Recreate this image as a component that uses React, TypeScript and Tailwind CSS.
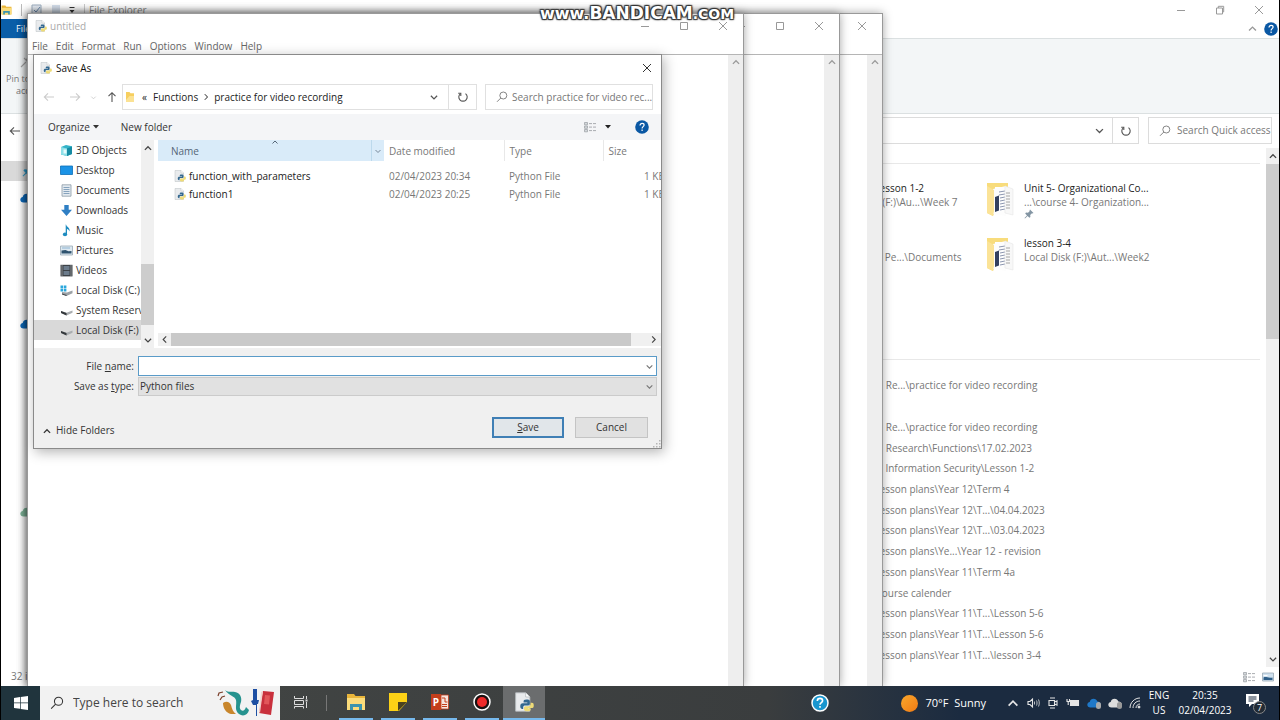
import React from "react";
import type { ReactNode } from "react";

type IconProps = { className?: string };

const line = { fill: "none", stroke: "currentColor", strokeWidth: 1.1 } as const;

function Chevron({ dir, className = "size-2" }: { dir: "up" | "down" | "left" | "right"; className?: string }) {
  const d = {
    up: "M1.5 5.5 4 3l2.5 2.5",
    down: "M1.5 3 4 5.5 6.5 3",
    left: "M5.5 1.2 2.8 4l2.7 2.8",
    right: "M2.8 1.2 5.5 4 2.8 6.8",
  }[dir];
  return (
    <svg viewBox="0 0 8 8" className={className} {...line} strokeWidth={1} aria-hidden="true">
      <path d={d} />
    </svg>
  );
}

function CloseIcon({ className = "size-[10px]" }: IconProps) {
  return (
    <svg viewBox="0 0 10 10" className={className} {...line} strokeWidth={1} aria-hidden="true">
      <path d="M1 1l8 8M9 1L1 9" />
    </svg>
  );
}

function MaxIcon() {
  return (
    <svg viewBox="0 0 10 10" className="size-[10px]" {...line} strokeWidth={1} aria-hidden="true">
      <path d="M1.5 1.5h7v7h-7z" />
    </svg>
  );
}

function RestoreIcon() {
  return (
    <svg viewBox="0 0 10 10" className="size-[10px]" {...line} strokeWidth={1} aria-hidden="true">
      <path d="M1.5 3h6v6h-6zM3.3 3V1.3h5.4v5.6H7.5" />
    </svg>
  );
}

function MinIcon() {
  return (
    <svg viewBox="0 0 10 10" className="size-[10px]" {...line} strokeWidth={1} aria-hidden="true">
      <path d="M1 5.5h8" />
    </svg>
  );
}

function Arrow({ dir, className = "" }: { dir: "left" | "right" | "up"; className?: string }) {
  const d = {
    left: "M11 6H1.5M5 2.3 1.3 6 5 9.7",
    right: "M1 6h9.5M7 2.3 10.7 6 7 9.7",
    up: "M6 11V1.8M2.5 5.2 6 1.7l3.500 3.5",
  }[dir];
  return (
    <svg viewBox="0 0 12 12" className={"size-3 " + className} {...line} aria-hidden="true">
      <path d={d} />
    </svg>
  );
}

function RefreshIcon() {
  return (
    <svg viewBox="0 0 12 12" className="size-3" {...line} aria-hidden="true">
      <path d="M3.500 2.600A4.200 4.200 0 1 0 8.500 2.600" />
      <path d="M3.800 5V2.200H1.200" />
    </svg>
  );
}

function SearchIcon({ className = "size-3" }: IconProps) {
  return (
    <svg viewBox="0 0 12 12" className={className} {...line} strokeWidth={0.9} aria-hidden="true">
      <circle cx="7.300" cy="4.500" r="3.500" />
      <path d="M4.800 7 1 10.800" />
    </svg>
  );
}

function HelpIcon({ className = "size-[14px]" }: IconProps) {
  return (
    <svg viewBox="0 0 14 14" className={className} aria-hidden="true">
      <circle cx="7" cy="7" r="6.800" fill="#0a58a4" />
      <path d="M5 5.400c0-1.400 1-2.100 2.100-2.100 1.200 0 2 .8 2 1.800 0 1.500-2 1.600-2 3.300M7.100 9.600v1.300" fill="none" stroke="#fff" strokeWidth="1.200" />
    </svg>
  );
}

function ViewsIcon() {
  return (
    <svg viewBox="0 0 12 12" className="size-3" aria-hidden="true">
      <path d="M.5 1.500h3v2.300h-3zM.5 5h3v2.300h-3zM.5 8.500h3v2.300h-3z" fill="#d4d8dc" stroke="#a0a4a8" strokeWidth=".8" />
      <path d="M5 2.600h3M9 2.600h3M5 6.100h3M9 6.100h3M5 9.600h3M9 9.600h3" stroke="#a0a4a8" strokeWidth=".9" />
    </svg>
  );
}

function PictureIcon({ className = "size-3" }: IconProps) {
  return (
    <svg viewBox="0 0 12 12" className={className} aria-hidden="true">
      <path d="M.5 2h11v8H.5z" fill="#cfe0ee" stroke="#9aa9b5" strokeWidth=".8" />
      <path d="M1.500 9V6.500C4 5 6 7.500 10.500 6.500V9z" fill="#2f5f88" />
      <path d="M1.500 4.500h4" stroke="#fff" />
    </svg>
  );
}

function PythonFile({ className = "size-3" }: IconProps) {
  return (
    <svg viewBox="0 0 24 24" className={className} aria-hidden="true">
      <path d="M2 1h12l5 5v17H2z" fill="#e9ebed" stroke="#b9bec2" />
      <path d="M14 1v5h5" fill="#fff" stroke="#b9bec2" />
      <path d="M15 9c-3 0-3.500 1-3.500 2.300V12.500H16v1h-5.500c-2 0-3 1.300-3 3.500s1 3.300 2.500 3.300H11V18.500c0-1.500 1-2.300 2.500-2.300H17c1.300 0 2-1 2-2v-3C19 9.800 18 9 15 9z" fill="#33688f" />
      <path d="M20 13v1.500c0 1.500-1 2.500-2.500 2.500H14c-1.300 0-2 1-2 2v2c0 1.300 1.500 2.200 4.200 2.200s3.800-.9 3.800-2.200v-1.200h-3v-.5h5c1.300 0 1.700-1.300 1.700-3.300s-.7-3-2.200-3z" fill="#eedb77" />
    </svg>
  );
}

function FolderSmall({ className = "size-3" }: IconProps) {
  return (
    <svg viewBox="0 0 12 12" className={className} aria-hidden="true">
      <path d="M2 1h3.500l1 1.200H10V11H2z" fill="#f7cf5f" />
      <path d="M5.500 5H10v6H2V9z" fill="#fbe294" />
    </svg>
  );
}

function ExplorerIcon({ className = "h-[18px] w-5" }: IconProps) {
  return (
    <svg viewBox="0 0 20 18" className={className} aria-hidden="true">
      <path d="M1 1h7l1.500 2H19v14H1z" fill="#e9b53a" />
      <path d="M1 5h18v12H1z" fill="#fbdc7b" />
      <path d="M4 17v-6h12v6h-3v-3H7v3z" fill="#3b94ae" />
    </svg>
  );
}

function BigFolder() {
  return (
    <svg viewBox="0 0 28 38" className="h-[38px] w-7 shrink-0" aria-hidden="true">
      <path d="M0 2h21v4H8v24l-2 5-6-3z" fill="#f8dc7c" />
      <path d="M6 8l13-3v30L6 33z" fill="#fdfdfd" />
      <path d="M8 16l4-1.500v15L8 31z" fill="#33405f" />
      <path d="M12 11l6-1M12 14l6-1M13 17l5-1M13 20l5-1M13 23l5-1M13 26l5-1M13 29l5-1" stroke="#8d97b0" />
      <path d="M18 5l8 3v26l-8-2z" fill="#f8f8f8" stroke="#e6e6e6" strokeWidth=".6" />
      <path d="M19 12h4M19 15h4M19 18h4M19 21h4M19 24h4M19 27h4" stroke="#9a9a9a" strokeWidth=".9" />
      <path d="M0 5l7 4v21l-1 5-6-3z" fill="#fbe397" />
    </svg>
  );
}

function Cloud({ className = "" }: IconProps) {
  return (
    <svg viewBox="0 0 14 10" className={"h-[10px] w-[14px] shrink-0 " + className} fill="currentColor" aria-hidden="true">
      <path d="M3.500 9.500C1.500 9.500.3 8.300.3 6.700c0-1.500 1-2.500 2.400-2.800C3.200 2 4.700.8 6.500.8c1.900 0 3.400 1.200 3.900 2.800 2 .1 3.300 1.300 3.300 3 0 1.700-1.200 2.900-3 2.900z" />
    </svg>
  );
}

function PlaceIcon({ kind }: { kind: string }) {
  const art: Record<string, ReactNode> = {
    cube: (
      <>
        <path d="M1 3l5-2 6 1.200V10l-5 2-6-1.500z" fill="#33b3c8" />
        <path d="M1 3l6 1.500V12l-6-1.500z" fill="#8fe0e8" />
        <path d="M7 4.500l5-2V10l-5 2z" fill="#168ba3" />
        <path d="M3.500 5.500h3v4h-3z" fill="#e5fafc" />
      </>
    ),
    desktop: <path d="M.5 2h12v8.500H.5z" fill="#1b93e6" stroke="#0b6fb8" strokeWidth=".8" />,
    document: (
      <>
        <path d="M2 .8h9v11.400H2z" fill="#e3eaf0" stroke="#8c9aa6" strokeWidth=".8" />
        <path d="M3.500 3.500h6M3.500 5.500h6M3.500 7.500h6M3.500 9.500h6" stroke="#86a3bd" />
      </>
    ),
    download: <path d="M4.300 1h4.400v4.800H12L6.500 12 1 5.800h3.300z" fill="#2f7fc4" />,
    music: (
      <>
        <path d="M6 .5c.5 2.500 4.500 3.300 3.500 7-.5-1.500-1.500-2.300-2.500-2.500V10.500H5.700V.5z" fill="#1e8cc0" />
        <ellipse cx="5" cy="10.400" rx="2.200" ry="1.800" fill="#1e8cc0" />
      </>
    ),
    picture: (
      <>
        <path d="M.5 2h12v9H.5z" fill="#dde8f0" stroke="#9aa9b5" strokeWidth=".8" />
        <path d="M1.500 9.500v-3l4-.5 3 1.200 3-.2v2.500z" fill="#2f536f" />
        <path d="M2 4h8" stroke="#8fb5d3" />
      </>
    ),
    video: (
      <>
        <path d="M.5.8h12v11.600H.5z" fill="#3d4247" />
        <path d="M3.500 2h6v4h-6zM3.500 7h6v4h-6z" fill="#6c7c8c" />
        <path d="M2 1.500v10.500M11 1.500v10.500" stroke="#d5d5d5" strokeDasharray="1 1" />
      </>
    ),
    windisk: (
      <>
        <path d="M.5 1.500h2.600v2.700H.5zM3.800 1.500h2.600v2.700H3.800zM.5 4.800h2.600v2.700H.5zM3.800 4.800h2.600v2.700H3.800z" fill="#2aa7dc" />
        <path d="M2 8l5 .5 5.500-2v2.700L6.500 12 2 10z" fill="#9ba1a6" />
        <path d="M2 9.500 6.500 11v1L2 10.500z" fill="#3c4044" />
      </>
    ),
    disk: (
      <>
        <path d="M1 7l5.500 1.700L12.500 6.500v2.200L6.500 11.500 1 9z" fill="#a9adb0" />
        <path d="M1 7l5.500 2v2.500L1 9z" fill="#34383b" />
      </>
    ),
  };
  return (
    <svg viewBox="0 0 13 13" className="size-[13px] shrink-0" aria-hidden="true">
      {art[kind]}
    </svg>
  );
}

/* ---------- File Explorer ---------- */

const recentPaths = [
  "d Re...\\practice for video recording",
  "",
  "d Re...\\practice for video recording",
  "d Research\\Functions\\17.02.2023",
  " - Information Security\\Lesson 1-2",
  "lesson plans\\Year 12\\Term 4",
  "lesson plans\\Year 12\\T...\\04.04.2023",
  "lesson plans\\Year 12\\T...\\03.04.2023",
  "lesson plans\\Ye...\\Year 12 - revision",
  "lesson plans\\Year 11\\Term 4a",
  "course calender",
  "lesson plans\\Year 11\\T...\\Lesson 5-6",
  "lesson plans\\Year 11\\T...\\Lesson 5-6",
  "lesson plans\\Year 11\\T...\\lesson 3-4",
];

function Explorer() {
  return (
    <section className="flex h-full flex-col bg-white text-[#777]">
      <header className="flex h-[19px] items-center justify-between">
        <div className="flex items-center gap-[9px]">
          <ExplorerIcon className="h-3 w-[11px]" />
          <span className="h-3 w-px bg-[#bbb]" />
          <svg viewBox="0 0 12 12" className="size-3" aria-hidden="true">
            <path d="M1 1h9v10H1z" fill="#e6edf5" stroke="#9fb0c2" />
            <path d="M3 6l2 2 4-5" fill="none" stroke="#6c8bb0" />
          </svg>
          <span className="h-[10px] w-2 bg-[#d5dfec]" />
          <svg viewBox="0 0 6 8" className="h-2 w-[6px]" aria-hidden="true">
            <path d="M.5 1h5v1h-5zM.5 4h5L3 7z" fill="#333" />
          </svg>
          <span className="border-l border-[#ccc] pl-1 text-[10px] leading-3 text-[#888]">File Explorer</span>
        </div>
        <div className="flex items-center gap-[29px] pr-[15px] text-[#999]">
          <button aria-label="Minimize"><MinIcon /></button>
          <button aria-label="Restore"><RestoreIcon /></button>
          <button aria-label="Close"><CloseIcon /></button>
        </div>
      </header>
      <div className="flex h-[19px] items-center justify-between">
        <button className="h-full w-[40px] bg-[#0a5ea8] pl-[15px] text-left text-[9px] text-white">File</button>
        <div className="flex items-center gap-[6px] pr-px text-[#999]">
          <button aria-label="Collapse ribbon"><Chevron dir="up" className="size-[11px]" /></button>
          <button aria-label="Help"><HelpIcon /></button>
        </div>
      </div>
      <div className="flex h-[76px] flex-col border-y border-[#dbe0e1] bg-[#f3f6f7] pl-[5px] pt-[14px] text-[9px] leading-3">
        <svg viewBox="0 0 16 16" className="ml-[14px] size-4" {...line} stroke="#aaa" aria-hidden="true">
          <path d="M1 14l5-5M4 5l7 7M6 7l5-5 3 3-5 5" />
        </svg>
        <span className="pt-1">Pin to Quick</span>
        <span className="pl-[10px]">access</span>
      </div>
      <div className="flex items-center gap-[9px] py-[3px] pl-2 pr-[7px]">
        <Arrow dir="left" className="text-[#555]" />
        <div className="flex h-[27px] flex-1 items-center justify-end border border-[#dcdcdc]">
          <button aria-label="Previous locations" className="px-[7px] text-[#555]"><Chevron dir="down" className="size-[11px]" /></button>
          <button aria-label="Refresh" className="flex h-full w-[26px] items-center justify-center border-l border-[#dcdcdc] text-[#555]"><RefreshIcon /></button>
        </div>
        <label className="flex h-[27px] w-[124px] items-center gap-[6px] overflow-hidden border border-[#dcdcdc] pl-[10px]">
          <SearchIcon className="size-3 shrink-0" />
          <input aria-label="Search Quick access" placeholder="Search Quick access" className="w-24 bg-transparent text-[10px] outline-none placeholder:text-[#777]" />
        </label>
      </div>
      <div className="flex min-h-0 flex-1">
        <nav className="flex w-[40px] flex-col pt-[14px]">
          <div className="flex h-5 items-center justify-end bg-[#d9d9d9] pr-[7px]">
            <svg viewBox="0 0 10 10" className="size-3" fill="#2f9fd0" aria-hidden="true">
              <path d="M6 .5l3.500 3.500-1 .5-.5-.3L6.200 6l.2 2-1 .8L3.600 7 1 9.500.5 9 3 6.400 1.200 4.600l.8-1 2 .2L5.800 2l-.3-.5z" />
            </svg>
          </div>
          <div className="flex flex-col items-start pl-[19px] pt-3 text-[#0f6cbd]">
            <Cloud />
            <Cloud className="mt-[116px]" />
            <Cloud className="mt-[178px] text-[#7fb59a]" />
          </div>
        </nav>
        <main className="flex min-w-0 flex-1 flex-col pl-[836px] pr-[6px] pt-4 text-[10px] leading-[14px]">
          <div className="border-t border-[#e8e8e8]" />
          <div className="flex h-[195px] pt-[17px]">
            <div className="flex w-[110px] flex-col gap-[27px] whitespace-pre">
              <p className="h-7"><span className="text-[#222]">lesson 1-2</span><br />{"  (F:)\\Au...\\Week 7"}</p>
              <p className="h-7"><br />{"   Pe...\\Documents"}</p>
            </div>
            <div className="flex flex-col gap-[17px]">
              <div className="flex gap-[9px]">
                <BigFolder />
                <p className="whitespace-nowrap">
                  <span className="text-[#222]">Unit 5- Organizational Co...</span><br />
                  ...\course 4- Organization...
                  <svg viewBox="0 0 10 10" className="size-[10px]" fill="#8395a3" aria-hidden="true">
                    <path d="M6 .5l3.500 3.500-1 .5-.5-.3L6.200 6l.2 2-1 .8L3.600 7 1 9.500.5 9 3 6.400 1.200 4.600l.8-1 2 .2L5.800 2l-.3-.5z" />
                  </svg>
                </p>
              </div>
              <div className="flex gap-[9px]">
                <BigFolder />
                <p className="whitespace-nowrap">
                  <span className="text-[#222]">lesson 3-4</span><br />
                  Local Disk (F:)\Aut...\Week2
                </p>
              </div>
            </div>
          </div>
          <div className="border-t border-[#e8e8e8]" />
          <ul className="mt-[15px] flex h-[290px] flex-col whitespace-pre">
            {recentPaths.map((p, i) => (
              <li key={i} className="flex flex-1 items-center">{p}</li>
            ))}
          </ul>
        </main>
        <div className="mt-px flex w-[13px] flex-col items-center bg-[#f0f0f0] text-[#444]">
          <Chevron dir="up" className="my-[3px] size-[10px]" />
          <div className="h-[175px] w-full bg-[#cdcdcd]" />
          <Chevron dir="down" className="mb-[3px] mt-auto size-[10px]" />
        </div>
      </div>
      <footer className="flex h-[19px] items-center justify-between pl-[10px] pr-[5px] text-[10px]">
        <span>32 items</span>
        <div className="flex gap-[7px]"><ViewsIcon /><PictureIcon /></div>
      </footer>
    </section>
  );
}

/* ---------- Editor windows ---------- */

function EditorWindow({ className, children }: { className: string; children?: ReactNode }) {
  return (
    <section className={"absolute bottom-0 left-[26px] top-[13px] flex flex-col border border-b-0 border-[#999] bg-white shadow-[0_0_9px_rgba(0,0,0,0.35)] " + className}>
      <header className="flex h-[41px] justify-between border-b border-[#b5b5b5]">
        <div>{children}</div>
        <div className="flex h-6 items-center gap-[29px] pr-[15px] text-[#999]">
          <button aria-label="Minimize"><MinIcon /></button>
          <button aria-label="Maximize"><MaxIcon /></button>
          <button aria-label="Close"><CloseIcon /></button>
        </div>
      </header>
      <div className="flex w-[15px] flex-1 justify-center self-end bg-[#eee] pt-[2px] text-[#999]">
        <Chevron dir="up" className="size-[10px]" />
      </div>
    </section>
  );
}

/* ---------- Save dialog ---------- */

const places = [
  ["cube", "3D Objects"],
  ["desktop", "Desktop"],
  ["document", "Documents"],
  ["download", "Downloads"],
  ["music", "Music"],
  ["picture", "Pictures"],
  ["video", "Videos"],
  ["windisk", "Local Disk (C:)"],
  ["disk", "System Reserv"],
  ["disk", "Local Disk (F:)"],
];

const files = [
  ["function_with_parameters", "02/04/2023 20:34"],
  ["function1", "02/04/2023 20:25"],
];

function SaveDialog() {
  return (
    <section className="absolute left-[32px] top-[54px] flex w-[629px] flex-col border border-[#8a8a8a] bg-white text-[10px] text-[#333] shadow-[2px_3px_12px_rgba(0,0,0,0.3)]">
      <header className="flex h-[26px] items-center justify-between pl-[6px] pr-[9px]">
        <div className="flex items-center gap-1 text-[#111]"><PythonFile /> Save As</div>
        <button aria-label="Close"><CloseIcon /></button>
      </header>

      <div className="flex h-8 items-center gap-2 pl-[9px] pr-2">
        <div className="flex items-center text-[#ccc]">
          <Arrow dir="left" />
          <Arrow dir="right" className="ml-[14px]" />
          <Chevron dir="down" className="ml-[9px] size-[7px]" />
          <Arrow dir="up" className="ml-[9px] text-[#555]" />
        </div>
        <div className="-ml-1 flex h-[26px] flex-1 items-center border border-[#e0e0e0] pl-px text-[#222]">
          <FolderSmall />
          <span className="px-[6px]">«</span>
          <span>Functions</span>
          <Chevron dir="right" className="mx-1 size-2" />
          <span>practice for video recording</span>
          <button aria-label="Previous locations" className="ml-auto px-[9px] text-[#555]"><Chevron dir="down" className="size-[10px]" /></button>
          <button aria-label="Refresh" className="flex h-full w-7 items-center justify-center border-l border-[#e0e0e0] text-[#555]"><RefreshIcon /></button>
        </div>
        <label className="flex h-[26px] w-[168px] items-center gap-1 overflow-hidden border border-[#e0e0e0] pl-[10px] text-[#777]">
          <SearchIcon className="size-3 shrink-0" />
          <input aria-label="Search" placeholder="Search practice for video rec..." className="min-w-0 flex-1 bg-transparent outline-none placeholder:text-[#777]" />
        </label>
      </div>

      <div className="mt-px flex h-[26px] items-center bg-[#f4f5f7] pl-[14px] pr-3">
        <button className="flex items-center gap-[3px]">
          Organize
          <svg viewBox="0 0 6 4" className="h-1 w-[6px]" aria-hidden="true"><path d="M0 0h6L3 3.500z" fill="#333" /></svg>
        </button>
        <button className="ml-[22px]">New folder</button>
        <button aria-label="Change your view" className="ml-auto flex items-center gap-[9px]">
          <ViewsIcon />
          <svg viewBox="0 0 6 4" className="h-1 w-[6px]" aria-hidden="true"><path d="M0 0h6L3 3.500z" fill="#222" /></svg>
        </button>
        <button aria-label="Help" className="ml-6"><HelpIcon /></button>
      </div>

      <div className="flex h-[208px]">
        <ul className="w-[107px] overflow-hidden">
          {places.map(([kind, name], i) => (
            <li key={name} className={"flex h-5 items-center gap-[3px] whitespace-nowrap pl-[26px] " + (i === 9 ? "bg-[#d9d9d9]" : "")}>
              <PlaceIcon kind={kind} />
              {name}
            </li>
          ))}
        </ul>
        <div className="flex w-[13px] flex-col items-center bg-[#f0f0f0] text-[#444]">
          <Chevron dir="up" className="mt-[3px] size-[10px]" />
          <div className="mt-[111px] h-[61px] w-full bg-[#cdcdcd]" />
          <Chevron dir="down" className="mb-[3px] mt-auto size-[10px]" />
        </div>
        <div className="ml-1 flex min-w-0 flex-1 flex-col overflow-hidden">
          <table className="w-full table-fixed border-collapse text-left text-[#777]">
            <colgroup>
              <col className="w-[226px]" />
              <col className="w-[120px]" />
              <col className="w-[99px]" />
              <col />
            </colgroup>
            <thead>
              <tr className="h-[21px]">
                <th className="relative bg-[#d9ebf9] p-0 pl-[13px] pt-px font-normal text-[#567]">
                  Name
                  <Chevron dir="up" className="absolute left-[113px] top-[-2px] size-2" />
                  <span className="absolute inset-y-0 right-0 flex w-[13px] items-center justify-center border-l border-[#bcd9ec] text-[#789]">
                    <Chevron dir="down" className="size-2" />
                  </span>
                </th>
                <th className="border-r border-[#e8e8e8] p-0 pl-[5px] pt-px font-normal">Date modified</th>
                <th className="border-r border-[#e8e8e8] p-0 pl-[5px] pt-px font-normal">Type</th>
                <th className="p-0 pl-[5px] pt-px font-normal">Size</th>
              </tr>
            </thead>
            <tbody>
              <tr className="h-[6px]"><td colSpan={4} className="p-0" /></tr>
              {files.map(([name, date]) => (
                <tr key={name} className="h-[18px] leading-4">
                  <td className="p-0 pl-4"><span className="flex items-center gap-[3px] text-[#222]"><PythonFile />{name}</span></td>
                  <td className="p-0 pl-[5px]">{date}</td>
                  <td className="p-0 pl-[5px]">Python File</td>
                  <td className="whitespace-nowrap p-0 pl-[41px]">1 KB</td>
                </tr>
              ))}
            </tbody>
          </table>
          <div className="mb-[2px] mt-auto flex h-[13px] items-center bg-[#f0f0f0] text-[#444]">
            <Chevron dir="left" className="mx-[2px] size-[9px]" />
            <div className="h-full w-[460px] bg-[#c9c9c9]" />
            <Chevron dir="right" className="ml-auto mr-[3px] size-[9px]" />
          </div>
        </div>
      </div>

      <div className="relative flex flex-col bg-[#f0f0f0] pb-[10px] pl-2 pr-1 pt-2">
        <div className="flex items-center gap-1">
          <label htmlFor="fname" className="w-[92px] text-right">File <u>n</u>ame:</label>
          <div className="flex h-5 flex-1 items-center border border-[#5a9bc8] bg-white pr-[2px] text-[#777]">
            <input id="fname" className="h-full min-w-0 flex-1 px-1 outline-none" />
            <Chevron dir="down" className="size-[9px]" />
          </div>
        </div>
        <div className="mt-px flex items-center gap-1">
          <label htmlFor="ftype" className="w-[92px] text-right">Save as <u>t</u>ype:</label>
          <div className="flex h-[19px] flex-1 items-center border border-[#cbcbcb] bg-[#e1e1e1] pr-[2px] text-[#777]">
            <select id="ftype" className="h-full min-w-0 flex-1 appearance-none pl-px text-[#333] outline-none">
              <option>Python files</option>
            </select>
            <Chevron dir="down" className="size-[9px]" />
          </div>
        </div>
        <div className="mt-[21px] flex items-center gap-[11px] pr-[9px]">
          <button className="mr-auto mt-[6px] flex items-center gap-1">
            <Chevron dir="up" className="size-[10px]" />
            Hide Folders
          </button>
          <button className="h-[21px] w-[72px] border-2 border-[#3f7fb5] bg-[#e1e6ea]"><u>S</u>ave</button>
          <button className="h-[21px] w-[73px] border border-[#c4c4c4] bg-[#e1e1e1]">Cancel</button>
        </div>
        <svg viewBox="0 0 8 8" className="absolute bottom-0 right-0 size-2" fill="#b5b5b5" aria-hidden="true">
          <path d="M6 0h1.500v1.500H6zM6 3h1.500v1.500H6zM6 6h1.500v1.500H6zM3 3h1.500v1.500H3zM3 6h1.500v1.500H3zM0 6h1.500v1.500H0z" />
        </svg>
      </div>
    </section>
  );
}

/* ---------- Taskbar ---------- */

function TaskButton({ label, active, running = true, children }: { label: string; active?: boolean; running?: boolean; children: ReactNode }) {
  return (
    <button aria-label={label} className={"flex h-full w-[42px] flex-col items-center " + (active ? "bg-[#6b6d6e]" : "")}>
      <span className="flex flex-1 items-center">{children}</span>
      <span className={"h-[2px] " + (running ? (active ? "w-full bg-[#76b9ed]" : "w-[34px] bg-[#76b9ed]") : "w-0")} />
    </button>
  );
}

function Taskbar() {
  return (
    <footer className="flex h-[34px] shrink-0 items-center bg-linear-to-r from-[#414443] from-20% via-[#3a3d3e] via-60% to-[#1b2b40] to-75% text-white">
      <button aria-label="Start" className="flex h-full w-[39px] items-center justify-center bg-[#20343d]">
        <svg viewBox="0 0 14 14" className="size-[14px]" fill="#fff" aria-hidden="true">
          <path d="M0 2l6-.9v5.500H0zM6.700 1 14 0v6.600H6.700zM0 7.300h6v5.500L0 12zM6.700 7.300H14V14l-7.300-1z" />
        </svg>
      </button>
      <label className="flex h-full w-[240px] items-center bg-[#f2f2f2] pl-[10px] pr-[5px] text-[#333]">
        <SearchIcon className="size-[14px] shrink-0" />
        <input aria-label="Type here to search" placeholder="Type here to search" className="ml-[9px] min-w-0 flex-1 bg-transparent text-xs outline-none placeholder:text-[#444]" />
        <svg viewBox="0 0 60 30" className="h-[30px] w-[60px] shrink-0" aria-hidden="true">
          <path d="M3 8l1-3 4-1M5 12l2-3 3-1" fill="none" stroke="#7a3f2a" strokeWidth="1.200" />
          <path d="M8 15c3-2 6-2 8 2 1 4 2 7 5 9h-5c-5-1-8-6-8-11z" fill="#c8862c" />
          <path d="M10 2c4 3 6 1 10 2 5 1 7 5 6 10-1 3-2 6 0 8 2 2 4 0 5-3l3 3c-1 5-6 7-10 4-5-4-2-9-3-14-1-4-7-4-11-10z" fill="#26938f" />
          <path d="M38 1h4v11h2l-1 4h-1v12h-1V17h-3l-2-4 2-1z" fill="#1d4fa3" />
          <path d="M48 3l11 1-3 23-12-2z" fill="#c9303c" />
          <path d="M46 4l2-1-3 22-1-1z" fill="#f3d2cd" />
          <path d="M50 7l5 .5-1 9-5-.5z" fill="#e2575a" />
        </svg>
      </label>
      <TaskButton label="Task View" running={false}>
        <svg viewBox="0 0 16 14" className="h-[14px] w-4" fill="none" stroke="#ddd" aria-hidden="true">
          <path d="M1.500 1v2.500h9V1M1.500 5.500h9v4h-9zM1.500 13.500v-2h9v2M13.500 1v3M13.500 7v6" />
          <path d="M12.500 5.500h2" strokeWidth="2" />
        </svg>
      </TaskButton>
      <span className="ml-1 mr-2 h-4 w-px bg-[#777]" />
      <div className="flex h-full">
        <TaskButton label="File Explorer"><ExplorerIcon /></TaskButton>
        <TaskButton label="Sticky Notes">
          <svg viewBox="0 0 18 18" className="size-[18px]" aria-hidden="true">
            <path d="M0 0h18v9l-8 9H0z" fill="#fcd116" />
            <path d="M9 9h9l-9 9z" fill="#4a4220" />
          </svg>
        </TaskButton>
        <TaskButton label="PowerPoint">
          <span className="flex h-4 items-stretch">
            <span className="w-[10px] bg-[#c43e1c] text-center text-[10px] font-bold leading-4">P</span>
            <svg viewBox="0 0 8 16" className="h-4 w-2" aria-hidden="true">
              <path d="M0 1h7.500v14H0z" fill="#f6e4de" stroke="#c43e1c" strokeWidth=".8" />
              <path d="M1 4h3v4h2.500M1 10.500h5M1 12.500h5" fill="none" stroke="#c43e1c" />
            </svg>
          </span>
        </TaskButton>
        <TaskButton label="Bandicam">
          <svg viewBox="0 0 18 18" className="size-[18px]" aria-hidden="true">
            <circle cx="9" cy="9" r="8" fill="#1a1010" stroke="#fff" strokeWidth="1.500" />
            <circle cx="9" cy="9" r="5" fill="#ee2a2a" />
          </svg>
        </TaskButton>
        <TaskButton label="Python" active><PythonFile className="size-5" /></TaskButton>
      </div>
      <button aria-label="Get Help" className="ml-auto">
        <svg viewBox="0 0 18 18" className="size-[18px]" aria-hidden="true">
          <circle cx="9" cy="9" r="8" fill="#1996cf" stroke="#fff" strokeWidth="1.500" />
          <path d="M6.300 7c0-1.700 1.200-2.600 2.700-2.600s2.600 1 2.600 2.300C11.600 8.600 9 8.700 9 10.800M9 12v1.700" fill="none" stroke="#fff" strokeWidth="1.600" />
        </svg>
      </button>
      <button className="ml-[72px] flex items-center gap-2 text-[11px]">
        <span className="size-[17px] rounded-full bg-linear-to-br from-[#f9a72b] to-[#f07a13]" />
        <span className="whitespace-pre">70°F  Sunny</span>
      </button>
      <div className="ml-5 flex items-center gap-[7px] text-[#e5e5e5]">
        <Chevron dir="up" className="size-[14px]" />
        <svg viewBox="0 0 13 12" className="h-3 w-[13px]" {...line} aria-hidden="true">
          <path d="M1 4.500h2L5.500 2v8L3 7.500H1z" /><path d="M7.500 4.500v3M9.500 3.500c.7 1.500.7 3.500 0 5M11.500 2.500c1 2 1 5 0 7" strokeWidth=".8" />
        </svg>
        <svg viewBox="0 0 12 12" className="size-3" {...line} aria-hidden="true">
          <path d="M2 3.500h5.500v5H2zM7.500 5l2.500-1.200v4.400L7.500 7M3 1h5M3 11h5" />
        </svg>
        <svg viewBox="0 0 14 12" className="h-3 w-[14px]" {...line} aria-hidden="true">
          <path d="M4.500 3.500h8v5h-8z" fill="currentColor" /><path d="M1 2v2.500h2.500V2M2.200 5v3" />
        </svg>
        <span className="relative"><Cloud className="text-[#1f78c8]" /><i className="absolute bottom-[-1px] right-0 h-[7px] w-[5px] rounded-sm bg-[#aaa]" /></span>
        <span className="relative"><Cloud className="text-[#ddd]" /><i className="absolute bottom-[-1px] right-0 h-[7px] w-[5px] rounded-sm bg-[#999]" /></span>
        <svg viewBox="0 0 12 12" className="size-3" {...line} strokeWidth={1} aria-hidden="true">
          <path d="M1 11C1 5.500 5.500 1 11 1M4 11c0-4 3-7 7-7M7 11c0-2.200 1.800-4 4-4" /><circle cx="10" cy="10" r="1" fill="currentColor" />
        </svg>
      </div>
      <div className="ml-[6px] w-6 text-center text-[10px] leading-[15px]">ENG<br />US</div>
      <div className="ml-[7px] w-[54px] text-center text-[10px] leading-[15px]">20:35<br />02/04/2023</div>
      <button aria-label="7 new notifications" className="relative ml-[14px] mr-[13px] h-[18px] w-5">
        <svg viewBox="0 0 20 18" className="h-[18px] w-5" aria-hidden="true">
          <path d="M0 0h13v10H6l-3 3v-3H0z" fill="#fff" />
          <path d="M2.500 3h8M2.500 5h8M2.500 7h5" stroke="#1b2b40" />
        </svg>
        <span className="absolute bottom-[-2px] right-0 flex size-[13px] items-center justify-center rounded-full border border-[#888] bg-[#222b35] text-[9px] leading-none">7</span>
      </button>
    </footer>
  );
}

export default function App() {
  return (
    <div className="flex h-screen flex-col overflow-hidden border-x border-black bg-white font-['Open_Sans','Noto_Sans',sans-serif]">
      <div className="relative min-h-0 flex-1 overflow-hidden">
        <Explorer />
        <EditorWindow className="w-[856px]" />
        <EditorWindow className="w-[813px]" />
        <EditorWindow className="w-[717px]">
          <div className="flex h-6 items-center gap-[3px] pl-[7px] text-[10px] text-[#aaa]"><PythonFile /> untitled</div>
          <nav className="flex gap-2 pl-1 text-[10px] leading-4 text-[#666]">
            {["File", "Edit", "Format", "Run", "Options", "Window", "Help"].map((m) => (
              <button key={m}>{m}</button>
            ))}
          </nav>
        </EditorWindow>
        <SaveDialog />
        <div className="absolute left-[539px] top-1 flex h-[18px] items-baseline font-['DejaVu_Sans',sans-serif] font-bold leading-[18px] text-white [text-shadow:1px_1px_1px_#333,-1px_-1px_1px_#333,1px_-1px_1px_#333,-1px_1px_1px_#333,0_0_3px_#555]">
          <span className="text-[16px]">www.</span>
          <span className="text-[17px]">BANDICAM</span>
          <span className="text-[14px]">.COM</span>
        </div>
      </div>
      <Taskbar />
    </div>
  );
}
